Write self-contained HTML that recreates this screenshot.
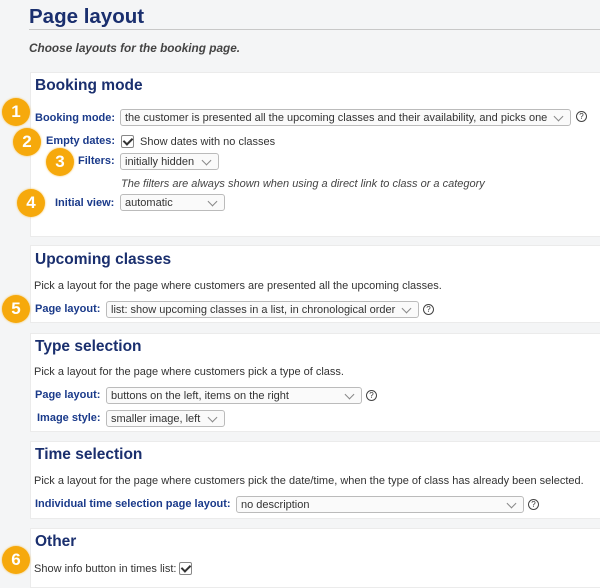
<!DOCTYPE html>
<html><head><style>
*{margin:0;padding:0;box-sizing:border-box}
body{width:600px;height:579px;background:#f4f5f6;font-family:"Liberation Sans",sans-serif;font-size:11px;color:#333;position:relative;overflow:hidden}
.a{position:absolute;white-space:nowrap}
h1{position:absolute;left:29px;top:5px;font-size:20.5px;color:#1a2f6e;font-weight:bold}
.rule{position:absolute;left:29px;top:29px;width:571px;height:1px;background:#c8c8c8}
.panel{position:absolute;left:30px;width:570px;background:#fff;border:1px solid #ebebeb;border-right:none}
h2{position:absolute;left:35px;font-size:15.5px;color:#1a2f6e;font-weight:bold}
.lbl{position:absolute;font-weight:bold;color:#1a3a8a;white-space:nowrap}
.sel{position:absolute;height:17px;border:1px solid #bbb;border-radius:3px;background:#fafafa;padding:2px 4px 0;white-space:nowrap;overflow:hidden;color:#333}
.sel:after{content:"";position:absolute;right:8px;top:3px;width:6px;height:6px;border-right:1px solid #888;border-bottom:1px solid #888;transform:rotate(45deg)}
.q{position:absolute;width:11px;height:11px;border:1px solid #444;border-radius:50%;font-size:8px;text-align:center;line-height:9px;color:#333}
.c{position:absolute;width:28px;height:28px;border-radius:50%;background:#f6a90c;color:#fff;font-weight:bold;font-size:17px;text-align:center;line-height:28px;box-shadow:0 0 2px #f6c050}
.cb{position:absolute;width:13px;height:13px;border:1px solid #888;border-radius:2px;background:#fff}
.cb:after{content:"";position:absolute;left:3px;top:0px;width:4px;height:7px;border-right:2px solid #333;border-bottom:2px solid #333;transform:rotate(45deg)}
</style></head><body>
<h1>Page layout</h1>
<div class="rule"></div>
<div class="a" style="left:29px;top:41px;font-size:11.8px;font-weight:bold;font-style:italic;color:#444">Choose layouts for the booking page.</div>

<div class="panel" style="top:72px;height:165px"></div>
<h2 style="top:77px">Booking mode</h2>
<div class="lbl" style="left:35px;top:112px">Booking mode:</div>
<div class="sel" style="left:120px;top:109px;width:451px">the customer is presented all the upcoming classes and their availability, and picks one</div>
<div class="q" style="left:576px;top:111px">?</div>
<div class="lbl" style="left:46px;top:135px">Empty dates:</div>
<div class="cb" style="left:121px;top:135px"></div>
<div class="a" style="left:140px;top:136px">Show dates with no classes</div>
<div class="lbl" style="left:78px;top:155px">Filters:</div>
<div class="sel" style="left:120px;top:153px;width:99px">initially hidden</div>
<div class="a" style="left:121px;top:178px;font-style:italic;color:#444">The filters are always shown when using a direct link to class or a category</div>
<div class="lbl" style="left:55px;top:197px">Initial view:</div>
<div class="sel" style="left:120px;top:194px;width:105px">automatic</div>

<div class="panel" style="top:245px;height:78px"></div>
<h2 style="top:251px">Upcoming classes</h2>
<div class="a" style="left:34px;top:280px">Pick a layout for the page where customers are presented all the upcoming classes.</div>
<div class="lbl" style="left:35px;top:303px">Page layout:</div>
<div class="sel" style="left:106px;top:301px;width:313px">list: show upcoming classes in a list, in chronological order</div>
<div class="q" style="left:423px;top:304px">?</div>

<div class="panel" style="top:333px;height:99px"></div>
<h2 style="top:338px">Type selection</h2>
<div class="a" style="left:34px;top:366px">Pick a layout for the page where customers pick a type of class.</div>
<div class="lbl" style="left:35px;top:389px">Page layout:</div>
<div class="sel" style="left:106px;top:387px;width:256px">buttons on the left, items on the right</div>
<div class="q" style="left:366px;top:390px">?</div>
<div class="lbl" style="left:37px;top:412px">Image style:</div>
<div class="sel" style="left:106px;top:410px;width:119px">smaller image, left</div>

<div class="panel" style="top:441px;height:78px"></div>
<h2 style="top:446px">Time selection</h2>
<div class="a" style="left:34px;top:475px">Pick a layout for the page where customers pick the date/time, when the type of class has already been selected.</div>
<div class="lbl" style="left:35px;top:498px">Individual time selection page layout:</div>
<div class="sel" style="left:236px;top:496px;width:288px">no description</div>
<div class="q" style="left:528px;top:499px">?</div>

<div class="panel" style="top:528px;height:60px"></div>
<h2 style="top:533px">Other</h2>
<div class="a" style="left:34px;top:563px">Show info button in times list:</div>
<div class="cb" style="left:179px;top:562px"></div>

<div class="c" style="left:2px;top:98px">1</div>
<div class="c" style="left:13px;top:128px">2</div>
<div class="c" style="left:46px;top:148px">3</div>
<div class="c" style="left:17px;top:189px">4</div>
<div class="c" style="left:2px;top:295px">5</div>
<div class="c" style="left:2px;top:546px">6</div>
</body></html>
